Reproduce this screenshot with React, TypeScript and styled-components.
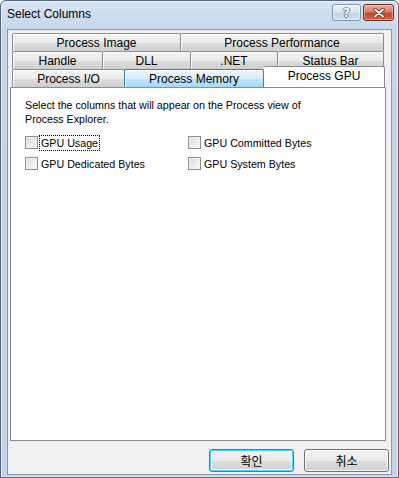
import React from 'react';
import styled, { createGlobalStyle, css } from 'styled-components';

const GlobalStyle = createGlobalStyle`
  html, body {
    margin: 0;
    padding: 0;
    background: #fff;
  }
  * {
    box-sizing: border-box;
  }
`;

const Window = styled.div`
  width: 399px;
  height: 478px;
  display: flex;
  flex-direction: column;
  border: 1px solid #56657a;
  border-radius: 6px 6px 0 0;
  background: linear-gradient(180deg, #d6e3f2 0%, #c6d7ec 30px, #c2d4ea 100%);
  box-shadow: inset 0 0 0 1px rgba(255, 255, 255, 0.55);
  font-family: 'Liberation Sans', Arial, sans-serif;
`;

const TitleBar = styled.div`
  height: 28px;
  flex: 0 0 28px;
  display: flex;
  align-items: flex-start;
  padding: 0 4px 0 6px;
`;

const Title = styled.span`
  font-size: 12px;
  color: #000;
  line-height: 26px;
`;

const CaptionButtons = styled.div`
  margin-left: auto;
  margin-top: 3px;
  display: flex;
  gap: 2px;
`;

const CaptionButton = styled.div<{ $close?: boolean }>`
  height: 17px;
  width: ${p => (p.$close ? 31 : 29)}px;
  border-radius: 3px;
  display: flex;
  align-items: center;
  justify-content: center;
  font-family: 'DejaVu Sans', sans-serif;
  font-weight: bold;
  font-size: 12px;
  color: #fff;
  ${p =>
    p.$close
      ? css`
          border: 1px solid #6f2a1f;
          background: linear-gradient(180deg, #e9aa9c 0%, #d9806b 45%, #c7452c 55%, #d8644a 100%);
          box-shadow: inset 0 0 0 1px rgba(255, 220, 210, 0.5);
        `
      : css`
          border: 1px solid #8393ab;
          background: linear-gradient(180deg, #edf2f9 0%, #dae5f1 45%, #c4d4e8 55%, #d2dfee 100%);
          box-shadow: inset 0 0 0 1px rgba(255, 255, 255, 0.6);
          text-shadow: 1px 0 0 #6f819b, -1px 0 0 #6f819b, 0 1px 0 #6f819b, 0 -1px 0 #8799b2;
        `}
`;

const Client = styled.div`
  flex: 1;
  margin: 0 6px 2px 6px;
  border: 1px solid #8a9bb1;
  background: #f0f0f0;
  display: flex;
  flex-direction: column;
  padding: 3px 2px 2px 2px;
`;

const TabControl = styled.div`
  flex: 1;
  width: 376px;
  display: flex;
  flex-direction: column;
`;

const TabRow = styled.div`
  display: flex;
  height: 18px;
  padding: 0 2px;
  position: relative;
`;

type TabState = 'normal' | 'hover' | 'selected';

const Tab = styled.div<{ $width: number; $state?: TabState }>`
  flex: 0 0 ${p => p.$width}px;
  height: 18px;
  display: flex;
  align-items: center;
  justify-content: center;
  font-size: 12px;
  color: #000;
  border-top: 1px solid #898c95;
  border-right: 1px solid #898c95;
  border-radius: 2px 2px 0 0;
  background: linear-gradient(180deg, #f3f3f3 0%, #ebebeb 50%, #dddddd 51%, #cfcfcf 100%);
  box-shadow: inset 1px 1px 0 #fff;
  &:first-child {
    border-left: 1px solid #898c95;
  }
  ${p =>
    p.$state === 'hover' &&
    css`
      border-top-color: #3c7fb1;
      border-right-color: #3c7fb1;
      border-left: 1px solid #3c7fb1;
      margin-left: -1px;
      background: linear-gradient(180deg, #eaf6fd 0%, #d9f0fc 50%, #bee6fd 51%, #a7d9f5 100%);
    `}
  ${p =>
    p.$state === 'selected' &&
    css`
      flex-basis: ${p.$width + 2}px;
      margin-right: -2px;
      height: 21px;
      margin-top: -3px;
      position: relative;
      z-index: 1;
      background: #fff;
      box-shadow: none;
      align-items: flex-start;
      padding-top: 2px;
    `}
`;

const Panel = styled.div`
  flex: 1;
  background: #fff;
  border: 1px solid #898c95;
  padding: 10px 14px;
  font-size: 10.7px;
  color: #000;
`;

const Intro = styled.p`
  margin: 0;
  line-height: 14px;
  width: 290px;
`;

const OptionGrid = styled.div`
  margin-top: 6px;
  display: grid;
  grid-template-columns: 163px 1fr;
  grid-auto-rows: 21px;
`;

const Option = styled.label`
  display: flex;
  align-items: center;
  gap: 1px;
`;

const Box = styled.span`
  width: 13px;
  height: 13px;
  border: 1px solid #8f8f8f;
  background: linear-gradient(135deg, #d8d8d8 0%, #eeeeee 60%, #fbfbfb 100%);
  box-shadow: inset 0 0 0 1px #f4f4f4;
  flex: 0 0 13px;
`;

const OptionLabel = styled.span<{ $focused?: boolean }>`
  padding: 0 1px;
  line-height: 14px;
  border: 1px dotted ${p => (p.$focused ? '#000' : 'transparent')};
`;

const Footer = styled.div`
  display: flex;
  justify-content: flex-end;
  gap: 10px;
  padding-top: 8px;
`;

const Button = styled.button<{ $default?: boolean }>`
  width: 85px;
  height: 23px;
  padding: 0;
  font-family: 'Noto Sans CJK KR', 'Liberation Sans', sans-serif;
  font-size: 12px;
  color: #000;
  border-radius: 3px;
  border: 1px solid ${p => (p.$default ? '#3c7fb1' : '#707070')};
  background: linear-gradient(180deg, #f2f2f2 0%, #ebebeb 50%, #dddddd 51%, #cfcfcf 100%);
  box-shadow: ${p =>
    p.$default ? 'inset 0 0 0 1px #48d8fb, inset 0 0 0 2px #fff' : 'inset 0 0 0 1px #fcfcfc'};
`;

const rows: { label: string; width: number; state?: TabState }[][] = [
  [
    { label: 'Process Image', width: 169 },
    { label: 'Process Performance', width: 203 },
  ],
  [
    { label: 'Handle', width: 91 },
    { label: 'DLL', width: 88 },
    { label: '.NET', width: 87 },
    { label: 'Status Bar', width: 106 },
  ],
  [
    { label: 'Process I/O', width: 113 },
    { label: 'Process Memory', width: 140, state: 'hover' },
    { label: 'Process GPU', width: 119, state: 'selected' },
  ],
];

const options = [
  { label: 'GPU Usage', focused: true },
  { label: 'GPU Committed Bytes' },
  { label: 'GPU Dedicated Bytes' },
  { label: 'GPU System Bytes' },
];

const CloseGlyph = () => (
  <svg width="12" height="10" viewBox="0 0 12 10">
    <path d="M2 1.5 L10 8.5 M10 1.5 L2 8.5" stroke="#5a1a10" strokeWidth="3.4" strokeLinecap="round" />
    <path d="M2 1.5 L10 8.5 M10 1.5 L2 8.5" stroke="#fff" strokeWidth="2" strokeLinecap="round" />
  </svg>
);

const App = () => {
  return (
    <>
      <GlobalStyle />
      <Window>
        <TitleBar>
          <Title>Select Columns</Title>
          <CaptionButtons>
            <CaptionButton>?</CaptionButton>
            <CaptionButton $close>
              <CloseGlyph />
            </CaptionButton>
          </CaptionButtons>
        </TitleBar>
        <Client>
          <TabControl>
            {rows.map((row, i) => (
              <TabRow key={i}>
                {row.map(tab => (
                  <Tab key={tab.label} $width={tab.width} $state={tab.state}>
                    {tab.label}
                  </Tab>
                ))}
              </TabRow>
            ))}
            <Panel>
              <Intro>Select the columns that will appear on the Process view of Process Explorer.</Intro>
              <OptionGrid>
                {options.map(o => (
                  <Option key={o.label}>
                    <Box />
                    <OptionLabel $focused={o.focused}>{o.label}</OptionLabel>
                  </Option>
                ))}
              </OptionGrid>
            </Panel>
          </TabControl>
          <Footer>
            <Button $default>확인</Button>
            <Button>취소</Button>
          </Footer>
        </Client>
      </Window>
    </>
  );
};

export default App;
